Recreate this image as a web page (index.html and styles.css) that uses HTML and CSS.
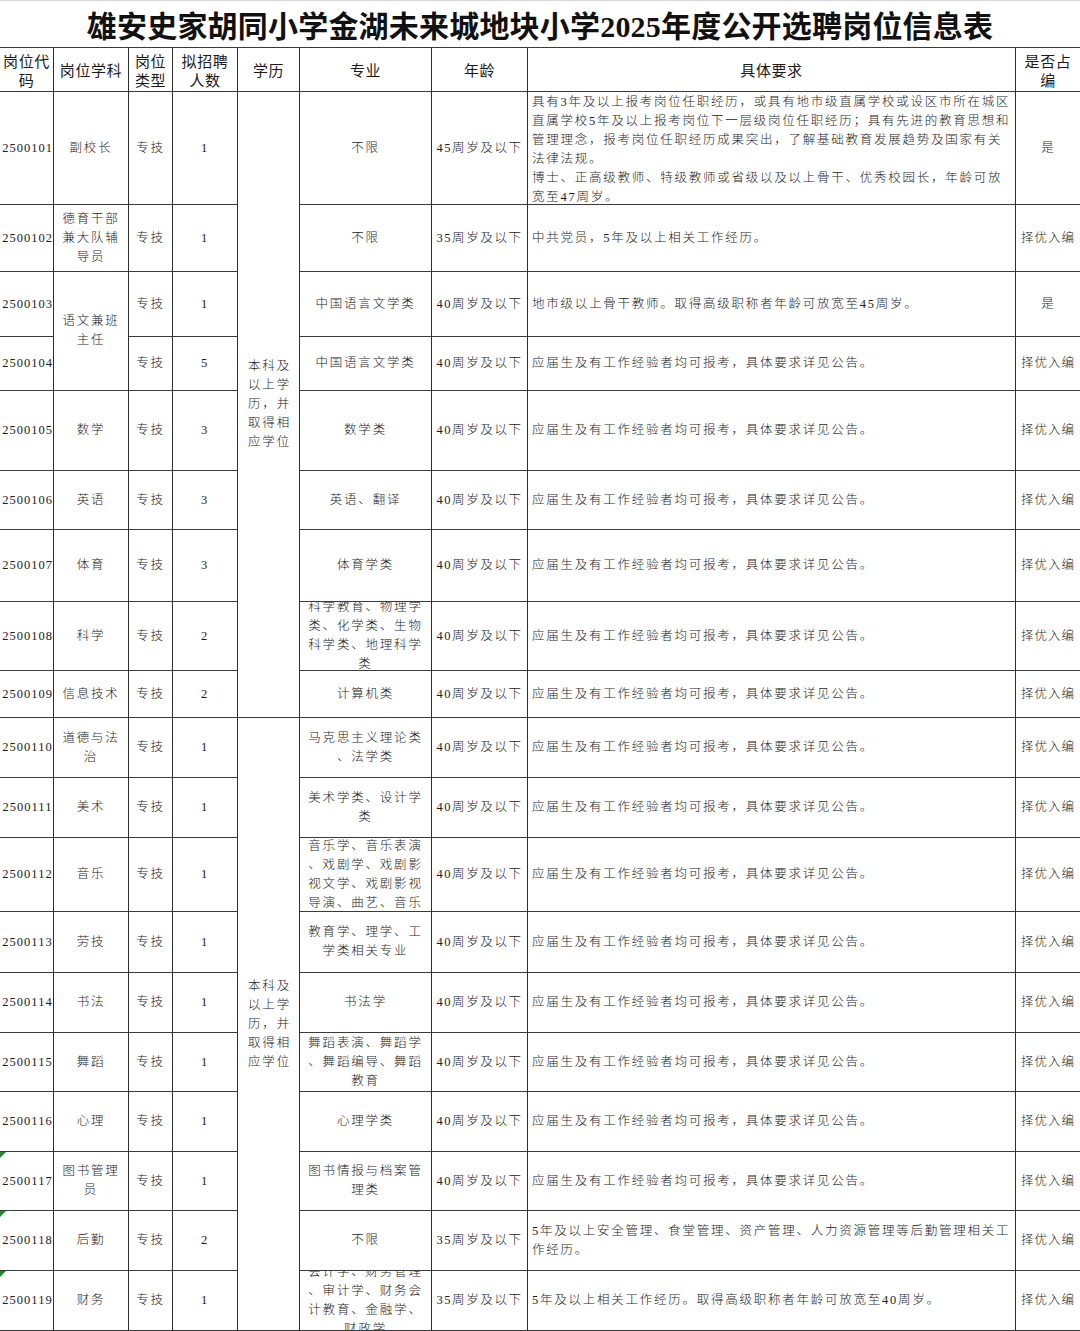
FILE: index.html
```html
<!DOCTYPE html>
<html lang="zh-CN">
<head>
<meta charset="utf-8">
<title>雄安史家胡同小学金湖未来城地块小学2025年度公开选聘岗位信息表</title>
<link rel="stylesheet" href="styles.css">
</head>
<body>
<div class="sheet">
  <div class="title">雄安史家胡同小学金湖未来城地块小学2025年度公开选聘岗位信息表</div>
  <div class="grid">
    <div class="c hd">岗位代<br>码</div>
    <div class="c hd">岗位学科</div>
    <div class="c hd">岗位<br>类型</div>
    <div class="c hd">拟招聘<br>人数</div>
    <div class="c hd">学历</div>
    <div class="c hd">专业</div>
    <div class="c hd">年龄</div>
    <div class="c hd">具体要求</div>
    <div class="c hd last">是否占<br>编</div>

    <!-- 2500101 -->
    <div class="c code">2500101</div>
    <div class="c">副校长</div>
    <div class="c">专技</div>
    <div class="c">1</div>
    <div class="c edu span9">本科及<br>以上学<br>历，并<br>取得相<br>应学位</div>
    <div class="c">不限</div>
    <div class="c age">45周岁及以下</div>
    <div class="c req first">具有3年及以上报考岗位任职经历，或具有地市级直属学校或设区市所在城区<br>直属学校5年及以上报考岗位下一层级岗位任职经历；具有先进的教育思想和<br>管理理念，报考岗位任职经历成果突出，了解基础教育发展趋势及国家有关<br>法律法规。<br>博士、正高级教师、特级教师或省级以及以上骨干、优秀校园长，年龄可放<br>宽至47周岁。</div>
    <div class="c last">是</div>

    <!-- 2500102 -->
    <div class="c code">2500102</div>
    <div class="c">德育干部<br>兼大队辅<br>导员</div>
    <div class="c">专技</div>
    <div class="c">1</div>
    <div class="c">不限</div>
    <div class="c age">35周岁及以下</div>
    <div class="c req">中共党员，5年及以上相关工作经历。</div>
    <div class="c last">择优入编</div>

    <!-- 2500103 -->
    <div class="c code">2500103</div>
    <div class="c span2">语文兼班<br>主任</div>
    <div class="c">专技</div>
    <div class="c">1</div>
    <div class="c">中国语言文学类</div>
    <div class="c age">40周岁及以下</div>
    <div class="c req">地市级以上骨干教师。取得高级职称者年龄可放宽至45周岁。</div>
    <div class="c last">是</div>

    <!-- 2500104 -->
    <div class="c code">2500104</div>
    <div class="c">专技</div>
    <div class="c">5</div>
    <div class="c">中国语言文学类</div>
    <div class="c age">40周岁及以下</div>
    <div class="c req">应届生及有工作经验者均可报考，具体要求详见公告。</div>
    <div class="c last">择优入编</div>

    <!-- 2500105 -->
    <div class="c code">2500105</div>
    <div class="c">数学</div>
    <div class="c">专技</div>
    <div class="c">3</div>
    <div class="c">数学类</div>
    <div class="c age">40周岁及以下</div>
    <div class="c req">应届生及有工作经验者均可报考，具体要求详见公告。</div>
    <div class="c last">择优入编</div>

    <!-- 2500106 -->
    <div class="c code">2500106</div>
    <div class="c">英语</div>
    <div class="c">专技</div>
    <div class="c">3</div>
    <div class="c">英语、翻译</div>
    <div class="c age">40周岁及以下</div>
    <div class="c req">应届生及有工作经验者均可报考，具体要求详见公告。</div>
    <div class="c last">择优入编</div>

    <!-- 2500107 -->
    <div class="c code">2500107</div>
    <div class="c">体育</div>
    <div class="c">专技</div>
    <div class="c">3</div>
    <div class="c">体育学类</div>
    <div class="c age">40周岁及以下</div>
    <div class="c req">应届生及有工作经验者均可报考，具体要求详见公告。</div>
    <div class="c last">择优入编</div>

    <!-- 2500108 -->
    <div class="c code">2500108</div>
    <div class="c">科学</div>
    <div class="c">专技</div>
    <div class="c">2</div>
    <div class="c">科学教育、物理学<br>类、化学类、生物<br>科学类、地理科学<br>类</div>
    <div class="c age">40周岁及以下</div>
    <div class="c req">应届生及有工作经验者均可报考，具体要求详见公告。</div>
    <div class="c last">择优入编</div>

    <!-- 2500109 -->
    <div class="c code">2500109</div>
    <div class="c">信息技术</div>
    <div class="c">专技</div>
    <div class="c">2</div>
    <div class="c">计算机类</div>
    <div class="c age">40周岁及以下</div>
    <div class="c req">应届生及有工作经验者均可报考，具体要求详见公告。</div>
    <div class="c last">择优入编</div>

    <!-- 2500110 -->
    <div class="c code">2500110</div>
    <div class="c">道德与法<br>治</div>
    <div class="c">专技</div>
    <div class="c">1</div>
    <div class="c edu span10">本科及<br>以上学<br>历，并<br>取得相<br>应学位</div>
    <div class="c">马克思主义理论类<br>、法学类</div>
    <div class="c age">40周岁及以下</div>
    <div class="c req">应届生及有工作经验者均可报考，具体要求详见公告。</div>
    <div class="c last">择优入编</div>

    <!-- 2500111 -->
    <div class="c code">2500111</div>
    <div class="c">美术</div>
    <div class="c">专技</div>
    <div class="c">1</div>
    <div class="c">美术学类、设计学<br>类</div>
    <div class="c age">40周岁及以下</div>
    <div class="c req">应届生及有工作经验者均可报考，具体要求详见公告。</div>
    <div class="c last">择优入编</div>

    <!-- 2500112 -->
    <div class="c code">2500112</div>
    <div class="c">音乐</div>
    <div class="c">专技</div>
    <div class="c">1</div>
    <div class="c">音乐学、音乐表演<br>、戏剧学、戏剧影<br>视文学、戏剧影视<br>导演、曲艺、音乐</div>
    <div class="c age">40周岁及以下</div>
    <div class="c req">应届生及有工作经验者均可报考，具体要求详见公告。</div>
    <div class="c last">择优入编</div>

    <!-- 2500113 -->
    <div class="c code">2500113</div>
    <div class="c">劳技</div>
    <div class="c">专技</div>
    <div class="c">1</div>
    <div class="c">教育学、理学、工<br>学类相关专业</div>
    <div class="c age">40周岁及以下</div>
    <div class="c req">应届生及有工作经验者均可报考，具体要求详见公告。</div>
    <div class="c last">择优入编</div>

    <!-- 2500114 -->
    <div class="c code">2500114</div>
    <div class="c">书法</div>
    <div class="c">专技</div>
    <div class="c">1</div>
    <div class="c">书法学</div>
    <div class="c age">40周岁及以下</div>
    <div class="c req">应届生及有工作经验者均可报考，具体要求详见公告。</div>
    <div class="c last">择优入编</div>

    <!-- 2500115 -->
    <div class="c code">2500115</div>
    <div class="c">舞蹈</div>
    <div class="c">专技</div>
    <div class="c">1</div>
    <div class="c">舞蹈表演、舞蹈学<br>、舞蹈编导、舞蹈<br>教育</div>
    <div class="c age">40周岁及以下</div>
    <div class="c req">应届生及有工作经验者均可报考，具体要求详见公告。</div>
    <div class="c last">择优入编</div>

    <!-- 2500116 -->
    <div class="c code">2500116</div>
    <div class="c">心理</div>
    <div class="c">专技</div>
    <div class="c">1</div>
    <div class="c">心理学类</div>
    <div class="c age">40周岁及以下</div>
    <div class="c req">应届生及有工作经验者均可报考，具体要求详见公告。</div>
    <div class="c last">择优入编</div>

    <!-- 2500117 -->
    <div class="c code flag">2500117</div>
    <div class="c">图书管理<br>员</div>
    <div class="c">专技</div>
    <div class="c">1</div>
    <div class="c">图书情报与档案管<br>理类</div>
    <div class="c age">40周岁及以下</div>
    <div class="c req">应届生及有工作经验者均可报考，具体要求详见公告。</div>
    <div class="c last">择优入编</div>

    <!-- 2500118 -->
    <div class="c code flag">2500118</div>
    <div class="c">后勤</div>
    <div class="c">专技</div>
    <div class="c">2</div>
    <div class="c">不限</div>
    <div class="c age">35周岁及以下</div>
    <div class="c req">5年及以上安全管理、食堂管理、资产管理、人力资源管理等后勤管理相关工<br>作经历。</div>
    <div class="c last">择优入编</div>

    <!-- 2500119 -->
    <div class="c code flag">2500119</div>
    <div class="c">财务</div>
    <div class="c">专技</div>
    <div class="c">1</div>
    <div class="c">会计学、财务管理<br>、审计学、财务会<br>计教育、金融学、<br>财政学</div>
    <div class="c age">35周岁及以下</div>
    <div class="c req">5年及以上相关工作经历。取得高级职称者年龄可放宽至40周岁。</div>
    <div class="c last">择优入编</div>
  </div>
</div>
</body>
</html>
```

FILE: styles.css
```css
html, body {
  margin: 0;
  padding: 0;
  background: #ffffff;
}

body {
  font-family: "Liberation Serif", "Noto Sans CJK SC", serif;
  color: #1c1c1c;
}

.sheet {
  width: 1080px;
  height: 1331px;
  overflow: hidden;
}

.title {
  box-sizing: border-box;
  height: 48px;
  border-bottom: 1px solid #3a3a3a;
  border-top: 1px solid #d8d8d8;
  display: flex;
  align-items: center;
  justify-content: center;
  font-family: "Liberation Serif", "Noto Sans CJK SC", serif;
  font-weight: 700;
  font-size: 30px;
  letter-spacing: 0.2px;
  color: #111;
  padding-top: 0;
}

.grid {
  display: grid;
  grid-template-columns: 54px 75px 44px 65px 62px 132px 96px 488px 64px;
  grid-template-rows: 44px 113px 67px 65px 54px 80px 59px 72px 69px 47px 60px 60px 74px 61px 60px 59px 60px 59px 60px 60px;
}

.c {
  box-sizing: border-box;
  border-right: 1px solid #2e2e2e;
  border-bottom: 1px solid #3a3a3a;
  overflow: hidden;
  display: flex;
  align-items: center;
  justify-content: center;
  text-align: center;
  white-space: nowrap;
  font-size: 12.5px;
  line-height: 19px;
  letter-spacing: 1.8px;
  font-weight: 300;
  position: relative;
}

.c.last {
  border-right: none;
  letter-spacing: 1px;
}

.hd {
  font-family: "Noto Sans CJK SC", sans-serif;
  font-size: 15px;
  font-weight: 400;
  letter-spacing: 0.6px;
  line-height: 19px;
  color: #1a1a1a;
}

.hd.last {
  letter-spacing: 0.6px;
}

.code {
  letter-spacing: 1px;
  font-size: 12.5px;
  padding-left: 2px;
}

.age {
  letter-spacing: 1.6px;
}

.req {
  justify-content: flex-start;
  text-align: left;
  padding-left: 4px;
  letter-spacing: 1.75px;
}

.req.first {
  padding-top: 3px;
}

.edu {
  padding-left: 2px;
}

.span2 {
  grid-row: span 2;
}

.span9 {
  grid-row: span 9;
}

.span10 {
  grid-row: span 10;
}

.flag::before {
  content: "";
  position: absolute;
  left: 0;
  top: 0;
  width: 0;
  height: 0;
  border-top: 6px solid #1f8a2e;
  border-right: 6px solid transparent;
}
```
